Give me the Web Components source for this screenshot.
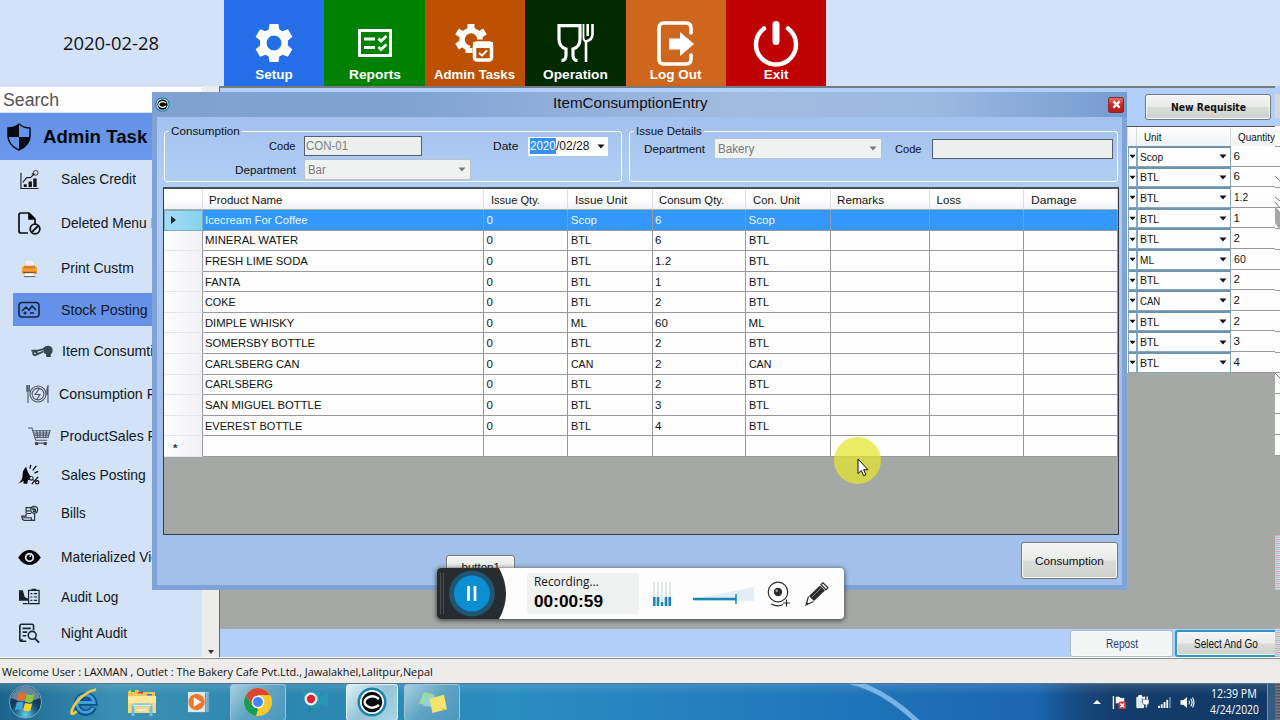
<!DOCTYPE html>
<html lang="en">
<head>
<meta charset="utf-8">
<title>ItemConsumptionEntry</title>
<style>
    html, body { margin: 0; width: 1280px; height: 720px; overflow: hidden; }
    body { font: 11.5px "Liberation Sans", Arial, sans-serif; color: #111; }
</style>
</head>
<body>
<pos-desktop></pos-desktop>

<script>
const ICONS = {
    gear: ['0 0 24 24', '<path fill="#fff" fill-rule="evenodd" d="M9.2 0h5.6l.6 3.5 2 1.1 3.4-1.3 2.8 4.8-2.8 2.3v3.2l2.8 2.3-2.8 4.8-3.4-1.3-2 1.1-.6 3.5H9.2l-.6-3.5-2-1.1-3.4 1.3L.4 15.9l2.8-2.3v-3.2L.4 8.100l2.800-4.800 3.400 1.300 2-1.100zM12 7.300a4.700 4.700 0 1 0 0 9.400 4.700 4.700 0 0 0 0-9.400z"/>'],
    reports: ['0 0 34 28', '<path fill="none" stroke="#fff" stroke-width="3" d="M1.500 1.500h31v25h-31z"/><path fill="none" stroke="#fff" stroke-width="2.800" d="M6 10h11M6 18.500h11M20.500 9.500l2.500 2.500 5.500-5M20.500 18l2.500 2.500 5.500-5"/>'],
    tasks: ['0 0 38 38', '<path fill="none" stroke="#fff" stroke-width="5.500" d="M14 24.500a9 9 0 1 1 10-9"/><path stroke="#fff" stroke-width="7" d="M15 0v6M1 7.500l5 3M1 22.500l5-3M29 7.500l-5 3M13 24v5"/><rect x="18.500" y="19" width="17" height="17" rx="2.500" fill="#bd5101" stroke="#fff" stroke-width="3.500"/><path fill="#fff" d="M17 18h20v6H17z"/><path fill="none" stroke="#fff" stroke-width="2" d="M23 29l3 2.500 5-5"/>'],
    operation: ['0 0 38 38', '<path fill="none" stroke="#fff" stroke-width="3.200" d="M5.500 36.400q4.500 0 4.500-5V25q-7-2-7-10V1.600h21V15q0 8-7 10v6.400q0 5 4.500 5"/><path fill="none" stroke="#fff" stroke-width="2.600" d="M36.500 0v10q0 6-6.500 7.500V38M31.700 0v12"/><path fill="none" stroke="#fff" stroke-width="1.800" d="M27.500 0v14q0 3 3 3.500"/>'],
    logout: ['0 0 37 45', '<path fill="none" stroke="#fff" stroke-width="3.600" stroke-linecap="round" d="M34 12V7q0-5-5-5H7Q2 2 2 7v31q0 5 5 5h22q5 0 5-5v-4"/><path fill="#fff" d="M12 17.500h11V11l14 12-14 12v-6.500H12z"/>'],
    power: ['0 0 44 44', '<path fill="none" stroke="#fff" stroke-width="4.500" stroke-linecap="round" d="M10 7.500a20 20 0 1 0 24 0"/><path stroke="#fff" stroke-width="7" stroke-linecap="round" d="M22 3.500v17"/>'],
    shield: ['0 0 24 28', '<path d="M12 1q5 4 11 4v8q0 9-11 14Q1 22 1 13V5q6 0 11-4z" fill="#6593e8" stroke="#080c12" stroke-width="1.500"/><path fill="#080c12" d="M12 1v13H1V5q6 0 11-4zM12 14h11q-.5 8-11 13z"/>'],
    chart: ['0 0 20 20', '<path fill="none" stroke="#222" stroke-width="1.200" d="M1 3v16.500h18.500M3 13l4-5h4l4-4"/><path fill="#111" d="M4 15h3v3H4zM9 12h3.500v6H9zM14 9h3.500v9H14zM15 3v3l-3-2z"/><circle cx="16.500" cy="3" r="2.500" fill="none" stroke="#333"/>'],
    deleted: ['0 0 24 24', '<path fill="none" stroke="#0b0f16" stroke-width="1.700" stroke-linejoin="round" d="M11 22H4q-2 0-2-2V4q0-2 2-2h8l6 6v5M12 2v6h6"/><path d="M12 2l6 6h-6z"/><circle cx="18" cy="18" r="4.800" fill="#d3e2f7" stroke="#0b0f16" stroke-width="1.800"/><path stroke="#0b0f16" stroke-width="1.800" d="M15 21l6-6"/>'],
    printer: ['0 0 20 20', '<path fill="#eceff3" stroke="#c9ced5" stroke-width=".7" d="M5 1h8l2 2v6H5z"/><rect x="2" y="8" width="16" height="8" rx="2" fill="#f0a13a"/><path fill="#d97f1e" d="M4 7h12v3H4zM2.500 13h15v2h-15z"/><path fill="#444" d="M4 14h12v1H4z"/><path fill="#fff" d="M5 15h10v3H5z"/><path stroke="#555" d="M4 18.500h12"/>'],
    stock: ['0 0 24 18', '<rect x="2" y="1.500" width="20" height="14.500" rx="3" fill="none" stroke="#14243f" stroke-width="1.600"/><path fill="none" stroke="#14243f" stroke-width="1.500" d="M5 10l4-4 3 3 3-4 4 4M8 10.500v3M6.500 12h3M13 12h4"/>'],
    hand: ['0 0 24 14', '<path fill="#3a4553" d="M14 3q3-3 7-2 3 1 3 5 0 3-2 4v3h-5v-3q-3-1-3-4z"/><path fill="none" stroke="#3a4553" stroke-width="2" d="M1 6h7l8-2M3 9q0-2 2-2t2 2-2 2-2-2M7 10l7-3"/>'],
    plate: ['0 0 24 20', '<g fill="none" stroke="#4c5664" stroke-width="1.100"><circle cx="12" cy="10" r="8"/><circle cx="12" cy="10" r="5.900"/><path d="M13.500 4.500L9 10.500h5L10.500 16M2 1v18M.8 1v6h2.600V1M22 1v18M22 2q-1.500 2-1 9"/></g>'],
    cart: ['0 0 24 20', '<g fill="none" stroke="#4c5664" stroke-width="1.200"><path d="M0 1h4l4 13h12M5 4h18l-2 7H7M6 6.300h16M6.500 8.600h15M9 4l1 7M12.500 4v7M16 4v7M19.500 4l-1 7M7 17h13"/></g><circle cx="9" cy="17.500" r="1.800" fill="#3b4450"/><circle cx="18" cy="17.500" r="1.800" fill="#3b4450"/>'],
    sales: ['0 0 24 24', '<path fill="#05080d" d="M9 3q1 8 9 15l-7-.5-1 4H6v-3l-6 3q5-4 5-9 0-6 4-9.500z"/><circle cx="14.500" cy="15.500" r="2" fill="#d3e2f7" stroke="#05080d"/><circle cx="21" cy="20" r="1.800" fill="none" stroke="#05080d" stroke-width="1.300"/><path stroke="#05080d" stroke-width="1.400" d="M15 22l7-8M13 5l1-4M16 7l4-5M18 10l4-2"/>'],
    bills: ['0 0 22 20', '<g fill="none" stroke="#2a3340" stroke-width="1.400"><path d="M13 3H7v10H2q0 5 3 5h12V9M7 7h5M8 10h5M3 15h10q0 3 2 3"/><circle cx="16.500" cy="5.500" r="4"/><path d="M18 3.500h-3v2h3v2h-3"/></g>'],
    eye: ['0 0 24 18', '<path d="M0 9Q5 1 12 1t12 8q-5 8-12 8T0 9z"/><circle cx="12" cy="9" r="5" fill="#d3e2f7"/><circle cx="12" cy="9" r="3"/><circle cx="12.800" cy="7.500" r="1" fill="#fff"/>'],
    audit: ['0 0 22 18', '<path fill="#18212e" d="M0 2h4l2 7 4 2v2H0z"/><path fill="none" stroke="#18212e" stroke-width="1.300" d="M1 3v9M4 16h5M10 2h11v14H10zM13 1h5"/><path stroke="#18212e" stroke-width="1.200" d="M12 5.500h2M15.500 5.500H19M12 9h2M15.500 9H19M12 12.500h2M15.500 12.500H19"/>'],
    night: ['0 0 24 22', '<path fill="none" stroke="#1c2736" stroke-width="1.800" d="M9 20H4q-2 0-2-2V3.500q0-2 2-2h11q2 0 2 2V8M2 20l3-2M5 6h9M5 10h5M5 14h4"/><circle cx="15.500" cy="13.500" r="4.300" fill="none" stroke="#1c2736" stroke-width="1.700"/><path stroke="#1c2736" stroke-width="2" d="M18.500 17l4.500 4.500"/>'],
    app: ['0 0 30 30', '<circle cx="15" cy="15" r="14.500" fill="#1583ae"/><circle cx="15" cy="15" r="12" fill="#fff"/><circle cx="15" cy="15" r="10.300" fill="#090b0c"/><path fill="none" stroke="#fff" stroke-width="2.400" d="M22 12q-6-5-12-1-5 4 0 8 6 4 12-1"/>'],
    orb: ['0 0 36 34', '<defs><radialGradient id="o" cy=".9"><stop stop-color="#5bd3ef"/><stop offset=".6" stop-color="#22688f"/><stop offset="1" stop-color="#15395b"/></radialGradient></defs><circle cx="18" cy="17" r="16.500" fill="url(#o)" stroke="#7faabf" stroke-width="1"/><path d="M3 13A15.500 15.500 0 0 1 33 13Q18 20 3 13z" fill="#a8cadb" opacity=".55"/><path fill="#ee6a27" d="M11 8q4-1.500 7 0l-1.500 8q-4-1.500-7 0z"/><path fill="#8cc63c" d="M19 9q4 1.500 8 0l-2 8q-4 1.500-7.500-.5z"/><path fill="#42a5df" d="M9 17.500q4-1.500 7 0l-2 8q-3-1.500-7 0z"/><path fill="#fbd330" d="M17.500 18q4 1.500 7.500.3l-2 7.700q-4 1.500-7.500-.5z"/>'],
    ie: ['0 0 32 30', '<path fill="none" stroke="#0b4f91" stroke-width="6.500" d="M25.500 20a9 9 0 1 1 .5-5H9"/><path fill="none" stroke="#3f9fd6" stroke-width="3" d="M25 20.500a9 9 0 1 1 1-5.500H10"/><path fill="none" stroke="#efcb45" stroke-width="2.800" d="M8 24q-7 6-5-1C6 15 16 4 28 1.500"/>'],
    folder: ['0 0 30 28', '<path fill="#e9c65c" d="M1 4l2-2h8l2 2h15v20H1z"/><path fill="#30a35b" d="M4 2h4v2H4z"/><path fill="#d33" d="M11 4h5v1.500h-5z"/><path fill="#2b7fd0" d="M20 6h5v1.500h-5z"/><path fill="#fae99d" d="M1 8h28v17H1z"/><path fill="#f4da7a" d="M1 15h28v10H1z"/><path fill="none" stroke="#72bbe6" stroke-width="3" d="M6 28v-9q0-2 2-2h14q2 0 2 2v9"/><path stroke="#dff3fc" stroke-width="1.300" d="M6 17.500h18M10 22h10"/>'],
    media: ['0 0 24 24', '<path fill="#a9cfe4" d="M5 1h18v21H5z" opacity=".8"/><path fill="#d9e8ef" d="M1 1h18v21H1z"/><circle cx="10" cy="11.500" r="8.500" fill="#ee7728"/><path fill="#fff" d="M7 6.500l8 5-8 5z"/><path stroke="#4d90b5" d="M19.500 2v20M22 2v20"/>'],
    chrome: ['0 0 28 28', '<circle cx="14" cy="14" r="14" fill="#fbc92d"/><path fill="#dc4436" d="M1.900 7a14 14 0 0 1 24.200 0H14L8 17.500z"/><path fill="#169d58" d="M1.900 7L8 17.500 14 21l-2 6.900A14 14 0 0 1 1.900 7z"/><circle cx="14" cy="14" r="6.300" fill="#fff"/><circle cx="14" cy="14" r="5" fill="#4385f2"/>'],
    recorder: ['0 0 32 26', '<path fill="#22a0b6" opacity=".6" d="M2 3h18v4l8-3v14l-8-3v4H8z"/><circle cx="11" cy="10" r="6.500" fill="#f1efef"/><circle cx="11" cy="10" r="4.200" fill="#d92436"/><path stroke="#19858e" stroke-width="2" d="M10 17l-1 6"/>'],
    notes: ['0 0 30 26', '<path fill="#9edb94" d="M6 2l11 3-4 12-12-3z"/><path fill="#8fd2e8" d="M7 6h11l-1 12L5 17z" opacity=".7"/><path fill="#f4e36d" d="M12 9l15-4 3 15-15 4z"/><path fill="#d9bd43" d="M30 20l-5-1-1 3z"/>'],
    flag: ['0 0 16 16', '<path stroke="#fff" stroke-width="1.400" d="M1.500 1v14"/><path fill="#f4f7f9" d="M4 2q3-1 5 1 2 1 4 0v7q-2 1-4 0-2-2-5-1z"/><rect x="7" y="7" width="8" height="8" rx="2" fill="#d83b34"/><path stroke="#fff" stroke-width="1.500" d="M9 9l4 4M13 9l-4 4"/>'],
    plug: ['0 0 16 16', '<path fill="#dce6ed" stroke="#fff" d="M2 3h7v11H2zM4 1h3v2H4z"/><path fill="#fff" stroke="#173f70" stroke-width=".7" d="M8 5h7v4q0 2-2 2v3h-2v-3q-3 0-3-2z"/><path stroke="#fff" stroke-width="1.500" d="M10 2v3M13 2v3"/>'],
    bars: ['0 0 14 12', '<path stroke="#fff" stroke-width="2" d="M1 12V9.500M4 12V8M7 12V5.500M10 12V3"/><path stroke="#7f9bb8" stroke-width="1.500" d="M13 12V0"/>'],
    sound: ['0 0 16 14', '<path fill="#fff" d="M1 4.500h3L8 1v12L4 9.500H1z"/><path fill="none" stroke="#fff" stroke-width="1.200" d="M10 5q1.500 2 0 4M12 3q3 4 0 8M14 1.500q3 5.500 0 11"/>'],
    webcam: ['0 0 24 26', '<g fill="none" stroke="#2a2c2e" stroke-width="1.200"><circle cx="11" cy="11" r="9.800"/><path d="M4 23q7 3.500 12 .5M16 22h7M19.500 18.500v7"/></g><circle cx="11" cy="11" r="4.200" fill="#2a2c2e"/><circle cx="9.700" cy="9.700" r="1.200" fill="#aaa"/>'],
    pencil: ['0 0 24 24', '<path fill="#2a2c2e" d="M4 14L15 3.500l5 5L9 19z"/><path fill="none" stroke="#2a2c2e" stroke-width="1.200" d="M16 2.500L18 .8l5 5-2 2zM3.500 14.500L1 23l7.500-3.500"/><path fill="#2a2c2e" d="M1.500 20L1 23l3-1z"/><path stroke="#888" d="M7 15l9-9"/>'],
    cursor: ['0 0 12 19', '<path fill="#fff" stroke="#111" stroke-width="1" d="M1 1v14.500l3.300-3 2.300 5.200 2.300-1-2.300-5H11z"/>'],
    close: ['0 0 10 10', '<path stroke="#fff" stroke-width="2.500" d="M1.500 1.500l7 7M8.500 1.500l-7 7"/>']
};

const define = (name, html) => customElements.define(name, class extends HTMLElement
{
    connectedCallback()
    {
        if(this.shadowRoot) return;
        this.attachShadow({ mode: 'open' });
        this.shadowRoot.innerHTML = typeof html === 'function' ? html(this) : html;
    }
});

const attr = (el, name, fallback = '') => el.getAttribute(name) ?? fallback;

const t = (text, w) => w ? `<fit-text w="${w}">${text}</fit-text>` : `<fit-text>${text}</fit-text>`;

define('ui-icon', el =>
{
    const [box, body] = ICONS[attr(el, 'name')];
    return `
        <style>
            :host { display: block; flex: none; width: ${attr(el, 'w', 20)}px; height: ${attr(el, 'h', 20)}px; }
            svg { display: block; width: 100%; height: 100%; overflow: visible; }
        </style>
        <svg viewBox="${box}">${body}</svg>`;
});

define('top-tile', el => `
    <style>
        :host { display: flex; flex-direction: column; align-items: center; width: 100.4px; height: 86px; background: ${attr(el, 'color')}; color: #fff; font-weight: bold; font-size: 13.5px; }
        .icon { height: 62px; padding-top: 4px; box-sizing: border-box; display: flex; align-items: center; transform: translateY(10px); }
        .label { height: 24px; line-height: 26px; }
    </style>
    <div class="icon"><slot></slot></div>
    <div class="label">${t(attr(el, 'label'), attr(el, 'w'))}</div>`);

define('top-bar', `
    <style>
        :host { display: flex; height: 86px; background: #d3e2f7; }
        .date { width: 224px; display: flex; align-items: center; padding-left: 63px; box-sizing: border-box; font: 18px "Open Sans", sans-serif; color: #101318; }
    </style>
    <div class="date">${t('2020-02-28', 96)}</div>
    <top-tile color="#246fe7" label="Setup" w="38"><ui-icon name="gear" w="38" h="38"></ui-icon></top-tile>
    <top-tile color="#018101" label="Reports" w="52"><ui-icon name="reports" w="34" h="28"></ui-icon></top-tile>
    <top-tile color="#bd5101" label="Admin Tasks" w="81"><ui-icon name="tasks" w="38" h="38"></ui-icon></top-tile>
    <top-tile color="#012a01" label="Operation" w="65"><ui-icon name="operation" w="38" h="38"></ui-icon></top-tile>
    <top-tile color="#cf661e" label="Log Out" w="52"><ui-icon name="logout" w="37" h="45"></ui-icon></top-tile>
    <top-tile color="#bf0101" label="Exit" w="25"><ui-icon name="power" w="44" h="44"></ui-icon></top-tile>`);

define('side-item', el => `
    <style>
        :host { display: flex; align-items: center; height: ${attr(el, 'h')}px; font-size: 14.5px; color: #101824; white-space: nowrap; }
        :host([active]) { background: #6592e8; margin: 5px 0 0 13px; }
        .icon { width: ${attr(el, 'ix', 29) * 2 - (el.hasAttribute('active') ? 26 : 0)}px; display: flex; justify-content: center; flex: none; }
        .label { margin-left: ${attr(el, 'x', 61) - attr(el, 'ix', 29) * 2 + (el.hasAttribute('active') ? 13 : 0)}px; }
    </style>
    <div class="icon"><ui-icon name="${attr(el, 'icon')}" w="${attr(el, 'iw', 22)}" h="${attr(el, 'ih', 22)}"></ui-icon></div>
    <div class="label">${t(attr(el, 'label'), attr(el, 'w'))}</div>`);

define('side-menu', `
    <style>
        :host { display: flex; background: #d3e2f7; overflow: hidden; }
        .list { width: 202px; }
        .search { height: 25px; margin-top: 1px; background: #fdfefd; color: #555; font-size: 18px; line-height: 26px; padding-left: 3px; }
        .head { height: 47px; margin-top: 1px; background: linear-gradient(#6291e6, #6a98ec); display: flex; align-items: center; gap: 12px; padding-left: 7px; font: bold 19px "Liberation Sans"; color: #05080d; box-sizing: border-box; }
        .scroll { width: 17px; background: #ececea; display: flex; align-items: flex-end; justify-content: center; }
        .scroll i { border: 3px solid transparent; border-top: 4px solid #333; border-bottom: 0; margin-bottom: 4px; }
    </style>
    <div class="list">
        <div class="search">${t('Search', 56)}</div>
        <div class="head"><ui-icon name="shield" w="24" h="28"></ui-icon>${t('Admin Task', 104)}</div>
        <side-item h="38" icon="chart" iw="19" ih="19" label="Sales Credit" w="75"></side-item>
        <side-item h="50" icon="deleted" iw="24" ih="24" label="Deleted Menu I" w="93"></side-item>
        <side-item h="40" icon="printer" iw="19" ih="19" label="Print Custm" w="73"></side-item>
        <side-item active h="33" icon="stock" iw="24" ih="18" label="Stock Posting" w="87"></side-item>
        <side-item h="50" icon="hand" ix="41" iw="23" ih="13" x="62" label="Item Consumti" w="91"></side-item>
        <side-item h="36" icon="plate" ix="38" iw="24" ih="20" x="59" label="Consumption R" w="98"></side-item>
        <side-item h="48" icon="cart" ix="39" iw="23" ih="19" x="60" label="ProductSales R" w="98"></side-item>
        <side-item h="30" icon="sales" label="Sales Posting" w="85"></side-item>
        <side-item h="46" icon="bills" iw="19" ih="17" label="Bills" w="25"></side-item>
        <side-item h="42" icon="eye" iw="23" ih="17" label="Materialized Vie" w="98"></side-item>
        <side-item h="38" icon="audit" iw="21" ih="18" label="Audit Log" w="57"></side-item>
        <side-item h="34" icon="night" label="Night Audit" w="66"></side-item>
    </div>
    <div class="scroll"><i></i></div>`);

define('win-button', el => `
    <style>
        :host { display: flex; align-items: center; justify-content: center; box-sizing: border-box; flex: none; width: ${attr(el, 'w')}px; height: ${attr(el, 'h')}px; border: 1px solid #74777b; border-radius: 3px; background: linear-gradient(#f3f4f3, #e9ebe9 49%, #dadcda 51%, #cfd1cf); box-shadow: inset 0 0 0 1px #f8f9f8; white-space: nowrap; }
        :host([flat]) { background: #f3f5f4; border-color: #a9bdd4; color: #1f3e80; }
        :host([focus]) { border: 2px solid #2b98ca; }
    </style>
    <slot></slot>`);

const CARET = '<svg width="8" height="5" viewBox="0 0 8 5"><path fill="currentColor" d="M.5.500h7L4 4.500z"/></svg>';

const STOCK = [
    ['Icecream For Coffee', 103, 'Scop', '6'],
    ['MINERAL WATER', 93, 'BTL', '6'],
    ['FRESH LIME SODA', 103, 'BTL', '1.2'],
    ['FANTA', 35, 'BTL', '1'],
    ['COKE', 31, 'BTL', '2'],
    ['DIMPLE WHISKY', 89, 'ML', '60'],
    ['SOMERSBY BOTTLE', 110, 'BTL', '2'],
    ['CARLSBERG CAN', 94, 'CAN', '2'],
    ['CARLSBERG', 68, 'BTL', '2'],
    ['SAN MIGUEL BOTTLE', 116, 'BTL', '3'],
    ['EVEREST BOTTLE', 97, 'BTL', '4']
];

const UNIT_WIDTH = { Scop: 26, BTL: 20, ML: 16, CAN: 22 };

define('requisite-grid', () => `
    <style>
        :host { display: block; border-top: 1px solid #555; }
        .row { display: grid; grid-template-columns: 908px 9px 94px 1fr; height: 20.6px; box-sizing: border-box; }
        .row > * { background: #fdfefd; display: flex; align-items: center; box-sizing: border-box; overflow: hidden; }
        .head { height: 19px; }
        .head > * { background: linear-gradient(#fff, #f0f1f4); border-right: 1px solid #d8dadf; padding-left: 6.5px; padding-top: 1px; }
        .combo { border: 1px solid #85a7bf; border-top: 2px solid #6c93ab; padding: 0 3px 0 2px; justify-content: space-between; }
        .arrow { justify-content: flex-end; padding: 0; }
        .qty { border-bottom: 1px solid #999; padding-left: 2.5px; }
    </style>
    <div class="row head"><span></span><span></span><span>${t('Unit', 17)}</span><span>${t('Quantity', 37)}</span></div>
    ${STOCK.map(([, , unit, qty]) => `
        <div class="row">
            <span></span><span class="combo arrow">${CARET}</span>
            <span class="combo">${t(unit, { Scop: 23, BTL: 19, ML: 14, CAN: 20 }[unit])}${CARET}</span>
            <span class="qty">${t(qty, qty === '60' ? 12 : qty === '1.2' ? 14 : 6)}</span>
        </div>`).join('')}`);

define('requisite-page', `
    <style>
        :host { display: flex; flex-direction: column; flex: 1; min-width: 0; border-left: 1px solid #666; border-top: 2px solid #777b82; box-sizing: border-box; background: #a6a8a5; overflow: hidden; }
        .tools { flex: none; height: 38px; background: #b1cff8; display: flex; align-items: flex-start; justify-content: flex-end; padding-top: 6px; gap: 4px; box-sizing: border-box; font: bold 11px "DejaVu Sans"; }
        requisite-grid { flex: 1; }
        .foot { flex: none; height: 29px; background: #b1cff8; display: flex; justify-content: flex-end; padding: 1px 0 1px; gap: 2px; box-sizing: border-box; font-size: 12px; margin-right: -6px; }
    </style>
    <div class="tools"><win-button w="126" h="26">${t('New Requisite', 75)}</win-button><win-button w="5" h="26"></win-button></div>
    <requisite-grid></requisite-grid>
    <div class="foot">
        <win-button flat w="103" h="27">${t('Repost', 32)}</win-button>
        <win-button focus w="111" h="27"><span style="margin-right:10px">${t('Select And Go', 64)}</span></win-button>
    </div>`);

define('group-box', el => `
    <style>
        :host { display: block; width: ${attr(el, 'w')}px; height: 58px; flex: none; }
        fieldset { margin: 0; height: 100%; box-sizing: border-box; padding: 0; border: 1px solid #f8fbfe; border-radius: 3px; min-width: 0; }
        legend { height: 14px; line-height: 14px; padding: 0 2px; margin-left: ${attr(el, 'lx', 4)}px; }
    </style>
    <fieldset><legend>${t(attr(el, 'label'), attr(el, 'lw'))}</legend><slot></slot></fieldset>`);

define('win-field', el => `
    <style>
        :host { display: flex; align-items: center; justify-content: space-between; box-sizing: border-box; flex: none; width: ${attr(el, 'w')}px; height: 20px; border: 1px solid #55606c; background: #ecefee; color: #7b7e7f; padding: 0 1px; font-size: 12px; }
        :host([combo]) { height: 21px; border-color: #b9c3cd; border-radius: 2px; background: #f0f2f1; padding: 0 4px 0 3px; color: #77797a; }
        :host([date]) { height: 19px; border-color: #fff; background: #fff; color: #111; padding: 0 2px 0 1px; }
        ::slotted(b) { font-weight: normal; background: #3390f5; color: #fff; padding: 1px 0; }
        div { display: flex; align-items: center; }
    </style>
    <div><slot></slot></div>${el.hasAttribute('combo') || el.hasAttribute('date') ? CARET : ''}`);

define('consumption-grid', () =>
{
    const heads = [['Product Name', 74], ['Issue Qty.', 49], ['Issue Unit', 52], ['Consum Qty.', 65], ['Con. Unit', 47], ['Remarks', 47], ['Loss', 24], ['Damage', 45]];

    return `
    <style>
        :host { display: block; box-sizing: border-box; height: 348px; border: 1px solid #333a44; border-top: 2px solid #4b5058; background: #a6a8a5; overflow: hidden; }
        .row { display: grid; grid-template-columns: 38.5px 281.500px 84.300px 84.300px 93.500px 84.500px 99.500px 94px 1fr; height: 20.580px; }
        .row > * { display: flex; align-items: center; background: #fdfefd; border-right: 1px solid #999; border-bottom: 1px solid #999; box-sizing: border-box; padding-left: 2.5px; }
        .row > :first-child { background: linear-gradient(90deg, #fefefe, #f0f1f5); border-bottom-color: #e4e6ea; color: #333; padding-left: 6px; }
        .head { height: 21px; }
        .head > *, .head > :first-child { background: linear-gradient(#fff 50%, #f1f2f5); border-right-color: #dcdee2; border-bottom: 1px solid #aaa; padding-left: 6.500px; padding-top: 1px; }
        .selected > * { background: #3398fd; color: #eef7ff; }
        .selected > :first-child { background: linear-gradient(90deg, #a4dcf1, #86d2ef); border: 1px solid #78afc9; }
    </style>
    <div class="row head"><span></span>${heads.map(([h, w]) => `<span>${t(h, w)}</span>`).join('')}</div>
    ${STOCK.map(([name, w, unit, qty], i) => `
        <div class="row ${i ? '' : 'selected'}">
            <span>${i ? '' : '<svg width="5" height="8" viewBox="0 0 5 8"><path fill="#222" d="M0 0l5 4-5 4z"/></svg>'}</span>
            <span>${t(name, w)}</span><span>0</span><span>${t(unit, UNIT_WIDTH[unit])}</span><span>${t(qty, qty === '60' ? 13 : '')}</span><span>${t(unit, UNIT_WIDTH[unit])}</span>
            <span></span><span></span><span></span>
        </div>`).join('')}
    <div class="row"><span style="padding:4px 0 0 9px;font-weight:bold">*</span>${'<span></span>'.repeat(8)}</div>`;
});

define('entry-dialog', `
    <style>
        :host { display: flex; flex-direction: column; width: 975px; height: 498px; box-sizing: border-box; border: 5px solid #7fa3d7; border-width: 0 5px 5px; background: #a2c0e9; }
        .title { flex: none; height: 25px; box-sizing: border-box; margin: 0 -5px; display: grid; grid-template-columns: 398px 1fr auto; align-items: center; background: linear-gradient(90deg, #81a2d1, #7fa2d2 25%, #a2bce0 60%, #9cb9e0 80%, #759bd0); font-size: 15px; padding: 0 3px 0 3px; }
        .title > fit-text { margin-top: -4px; }
        .close { width: 14px; height: 14px; border: 1px solid #8b2a2d; border-radius: 2px; background: linear-gradient(#e0726a, #c8261c 50%, #b71c17); display: grid; place-items: center; }
        .body { flex: 1; padding: 7px 3px 0 6px; background: linear-gradient(#a3c1ee, #afcdf3 12%, #afcdf3 25%, #a2c0e9 60%); }
        .groups { display: flex; gap: 7px; padding-left: 1px; margin-bottom: 5px; }
        .form { display: grid; grid-template-columns: 131px 174px 32px 1fr; column-gap: 8px; row-gap: 3px; margin-top: -2px; align-items: center; }
        .form > fit-text { justify-self: end; }
        .line { display: flex; align-items: center; padding-left: 14px; }
        .foot { display: flex; justify-content: space-between; padding: 7px 1px 0 283px; }
    </style>
    <div class="title">
        <ui-icon name="app" w="15" h="15"></ui-icon>${t('ItemConsumptionEntry', 155)}
        <div class="close"><ui-icon name="close" w="9" h="9"></ui-icon></div>
    </div>
    <div class="body">
        <div class="groups">
            <group-box w="458" label="Consumption" lw="69">
                <div class="form">
                    ${t('Code', 27)}<win-field w="118">${t('CON-01', 42)}</win-field>${t('Date', 25)}<win-field date w="80" style="margin-left:2px"><b>${t('2020', 26)}</b>${t('/02/28', 33)}</win-field>
                    ${t('Department', 61)}<win-field combo w="167">${t('Bar', 18)}</win-field>
                </div>
            </group-box>
            <group-box w="489" label="Issue Details" lw="66">
                <div class="line">${t('Department', 61)}<win-field combo w="168" style="margin:0 13px 0 9px">${t('Bakery', 36)}</win-field>${t('Code', 27)}<win-field w="181" style="margin-left:10px"></win-field></div>
            </group-box>
        </div>
        <consumption-grid></consumption-grid>
        <div class="foot">
            <win-button w="69" h="24" style="margin-top:13px">${t('button1', 38)}</win-button>
            <win-button w="97" h="37">${t('Consumption', 69)}</win-button>
        </div>
    </div>`);

define('record-bar', `
    <style>
        :host { display: flex; align-items: center; width: 407px; height: 51px; background: #fcfdfc; border-radius: 4px; box-shadow: 0 1px 4px 1px rgba(50, 55, 60, .75); overflow: hidden; }
        .knob { width: 69px; height: 51px; display: block; flex: none; }
        .time { margin-left: 21px; width: 112px; height: 41px; box-sizing: border-box; padding: 1px 0 0 7px; background: #f0f1f1; border-radius: 3px; font: 12px/15px "Open Sans", sans-serif; }
        .time b { display: block; font: bold 17px/26px "Liberation Sans"; color: #000; }
        .levels { margin-left: 14px; }
        .volume { margin: 3px 13px 0 22px; }
        ui-icon + ui-icon { margin-left: 14px; }
    </style>
    <svg class="knob" viewBox="0 0 69 51">
        <path fill="#292c2e" d="M0 0h62q14 26 0 51H0z"/><path stroke="#4a4d4f" d="M3.500 5v41M6.500 5v41"/>
        <circle cx="35" cy="25.500" r="23" fill="#1f5571"/><circle cx="35" cy="25.500" r="18" fill="#0c8ed2"/>
        <path stroke="#fff" stroke-width="2.700" d="M31.500 18v15M38 18v15"/>
    </svg>
    <div class="time">${t('Recording...', 65)}<b>${t('00:00:59', 69)}</b></div>
    <svg class="levels" width="18" height="24" viewBox="0 0 18 24"><path stroke="#d9dcdd" stroke-width="1.500" d="M1 0v24M5 0v24M9 0v24M13 0v24M17 0v24"/><path stroke="#1a86b8" stroke-width="2.600" d="M1.300 15v9M5 15v9M9 20v4M13 15v9M16.700 15v9"/></svg>
    <svg class="volume" width="61" height="18" viewBox="0 0 61 18"><path fill="#e2edf6" d="M2 13L61 1v14H2z"/><path stroke="#1a86b8" stroke-width="2.500" d="M0 13h43"/><path stroke="#1a86b8" stroke-width="1.500" d="M43 8v10"/></svg>
    <ui-icon name="webcam" w="24" h="26"></ui-icon><ui-icon name="pencil" w="24" h="24"></ui-icon>`);

define('task-slot', el => `
    <style>
        :host { display: flex; align-items: center; justify-content: center; box-sizing: border-box; width: ${attr(el, 'w')}px; height: 37px; flex: none; border-radius: 3px; }
        :host([open]) { border: 1px solid #9bc5dd; background: linear-gradient(135deg, #a9cfdf, #5fa3c2 50%, #4a98bf); }
        :host([active]) { background: linear-gradient(135deg, #dff0f6, #94c4d6 50%, #a8d6e5); border-color: #e4f3f8; }
    </style>
    <ui-icon name="${attr(el, 'icon')}" w="${attr(el, 'iw', 30)}" h="${attr(el, 'ih', 28)}"></ui-icon>`);

define('task-bar', `
    <style>
        :host { display: flex; align-items: center; height: 37px; border-top: 1px solid #58758c; box-sizing: border-box; background: linear-gradient(rgba(255,255,255,.12), transparent 30%), linear-gradient(90deg, #1b6590, #3b91b4 9%, #2c86af 22%, #2a8dc0 40%, #2079bc 62%, #1b66af 81%, #174b83 84%, #143c6c 87%, #113866); color: #fff; overflow: hidden; }
        .streak { margin-left: 386px; width: 80px; height: 37px; flex: none; }
        .tray { margin-left: auto; display: flex; align-items: center; gap: 8px; }
        .clock { text-align: center; font: 12px/16px "Open Sans", sans-serif; margin-left: 6px; width: 50px; display: flex; flex-direction: column; align-items: center; }
        .peek { width: 13px; height: 37px; border-left: 1px solid #7593b3; background: #345b83; box-sizing: border-box; }
    </style>
    <task-slot w="50" icon="orb" iw="35" ih="34"></task-slot>
    <task-slot w="68" icon="ie" iw="31" ih="29"></task-slot>
    <task-slot w="48" icon="folder" iw="30" ih="28"></task-slot>
    <task-slot w="64" icon="media" iw="23" ih="23"></task-slot>
    <task-slot open w="56" icon="chrome" iw="28" ih="28"></task-slot>
    <task-slot w="60" icon="recorder" iw="32" ih="26"></task-slot>
    <task-slot open active w="52" icon="app" iw="30" ih="30"></task-slot>
    <task-slot open w="56" icon="notes" iw="29" ih="25" style="margin-left:6px"></task-slot>
    <svg class="streak" viewBox="0 0 80 37"><path fill="none" stroke="#8fc4f0" stroke-width="5" opacity=".8" d="M5 -2Q40 6 76 42"/></svg>
    <div class="tray">
        <svg width="8" height="4"><path fill="#fff" d="M4 0l4 4H0z"/></svg>
        <ui-icon name="flag" w="15" h="15" style="margin-left:3px"></ui-icon>
        <ui-icon name="plug" w="15" h="16"></ui-icon>
        <ui-icon name="bars" w="13" h="11"></ui-icon>
        <ui-icon name="sound" w="16" h="13"></ui-icon>
        <div class="clock">${t('12:39 PM', 46)}${t('4/24/2020', 49)}</div>
        <div class="peek"></div>
    </div>`);

define('edge-strip', `
    <style>
        :host { display: flex; flex-direction: column; width: 5px; height: 720px; }
        .top { height: 86px; }
        .tools { height: 40px; background: linear-gradient(#b1cff8 20%, #d6d8d6 20% 80%, #b1cff8 80%); }
        .rows { height: 330px; background: repeating-linear-gradient(#fdfefd 0 19.600px, #999 19.600px 20.600px); }
        .gap { height: 79px; background: #a6a8a5; }
        .noise { background: repeating-linear-gradient(#d9a9bb 0 1px, #c5dfc7 1px 2px, #b7c3ed 2px 3px, #d7d6d4 3px 4px); }
        .dark { background: repeating-linear-gradient(#6b7990 0 1px, #7b4460 1px 2px, #55715a 2px 3px); }
    </style>
    <div class="top"></div><div class="tools"></div>
    <div class="rows"><svg width="5" height="330"><path fill="none" stroke="#77737d" d="M0 50l5 5M0 71l5 4M0 76l5 6M0 89l5 7M0 247l5 5"/><path fill="#aaa5a5" d="M0 80l5 6v18l-5-7z"/></svg></div>
    <div class="gap"></div><div class="noise" style="height:55px"></div><div style="height:38px"></div><div class="noise" style="height:29px"></div><div style="height:26px"></div><div class="dark" style="height:37px"></div>`);

define('pos-desktop', `
    <style>
        :host { display: flex; flex-direction: column; position: relative; width: 1280px; height: 720px; overflow: hidden; background: #ececea; }
        .work { height: 572px; display: flex; }
        side-menu { width: 219px; flex: none; }
        .status { height: 25px; box-sizing: border-box; border-top: 1px solid #8b8e90; background: #edecea; padding: 0 0 0 2px; font: 11.500px/25px "Open Sans", sans-serif; box-shadow: 0 -1px #fff; }
        entry-dialog { position: absolute; left: 152px; top: 92px; }
        record-bar { position: absolute; left: 437px; top: 568px; }
        edge-strip { position: absolute; left: 1275px; top: 0; }
        .pointer { position: absolute; left: 834px; top: 437px; width: 47px; height: 47px; border-radius: 50%; background: rgba(229, 230, 45, .72); }
        .pointer ui-icon { position: absolute; left: 23px; top: 21px; }
    </style>
    <top-bar></top-bar>
    <div class="work"><side-menu></side-menu><requisite-page></requisite-page></div>
    <div class="status">${t('Welcome User : LAXMAN , Outlet : The Bakery Cafe Pvt.Ltd., Jawalakhel,Lalitpur,Nepal', 431)}</div>
    <task-bar></task-bar>
    <edge-strip></edge-strip>
    <entry-dialog></entry-dialog>
    <div class="pointer"><ui-icon name="cursor" w="12" h="19"></ui-icon></div>
    <record-bar></record-bar>`);

// Registered last: it measures itself, so the fonts around it have to be in place.
customElements.define('fit-text', class FitText extends HTMLElement
{
    connectedCallback()
    {
        if(this.shadowRoot) return;
        this.attachShadow({ mode: 'open' });
        this.shadowRoot.innerHTML = `
            <style>
                :host { display: inline-block; white-space: nowrap; flex: none; }
                span { display: inline-block; transform-origin: 0 50%; }
            </style>
            <span><slot></slot></span>`;

        const w = Number(this.getAttribute('w'));
        if(!w) return;

        const span = this.shadowRoot.querySelector('span');
        span.style.transform = `scaleX(${w / span.offsetWidth})`;
        this.style.width = `${w}px`;
    }
});
</script>
</body>
</html>
